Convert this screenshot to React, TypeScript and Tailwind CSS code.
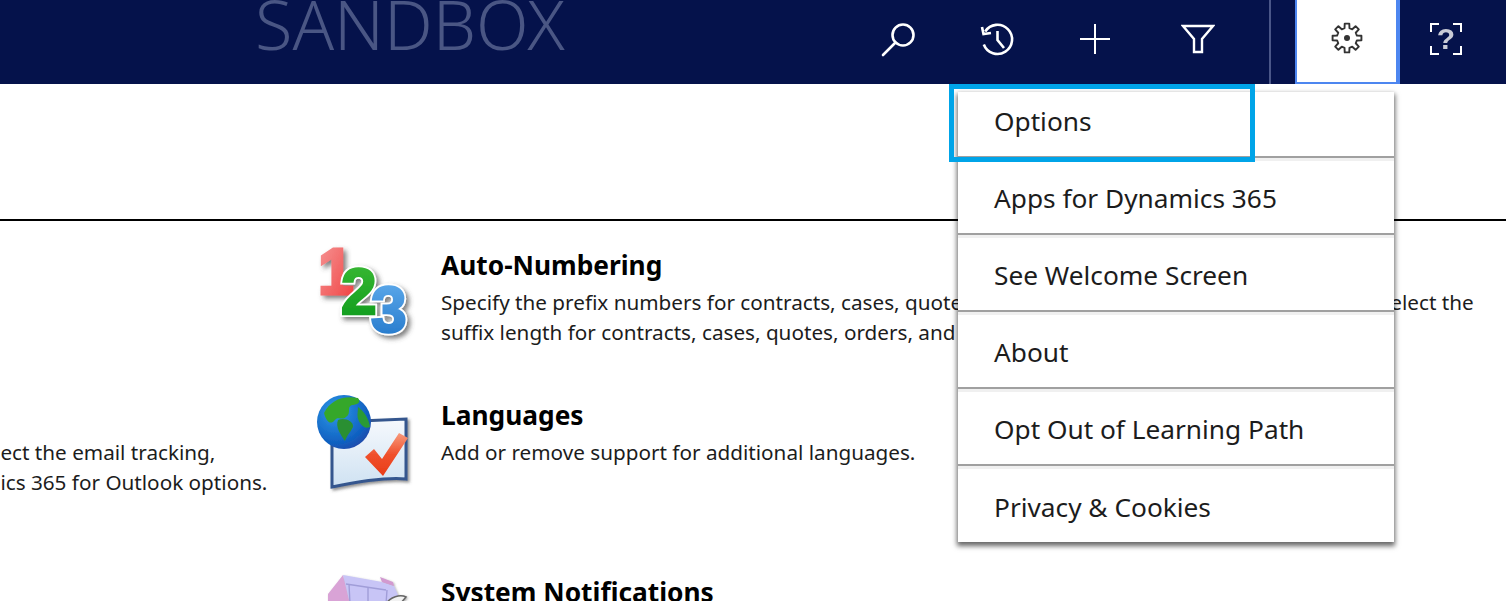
import React from "react"

const menuItems = [
  "Options",
  "Apps for Dynamics 365",
  "See Welcome Screen",
  "About",
  "Opt Out of Learning Path",
  "Privacy & Cookies",
]

function SearchIcon() {
  return (
    <svg width="38" height="38" viewBox="0 0 38 38" fill="none" stroke="white" strokeWidth="2.6">
      <circle cx="23" cy="15" r="10.5" />
      <path d="M15.5 22.5 L3 35" strokeLinecap="round" />
    </svg>
  )
}

function HistoryIcon() {
  return (
    <svg width="38" height="38" viewBox="0 0 38 38" fill="none" stroke="white" strokeWidth="2.6">
      <path d="M6.2 11.5 A14.6 14.6 0 1 1 4.8 24.5" />
      <path d="M3 7 L4.5 14 L12 13" />
      <path d="M18.5 11 V20 L25 28" />
    </svg>
  )
}

function PlusIcon() {
  return (
    <svg width="32" height="32" viewBox="0 0 32 32" fill="none" stroke="white" strokeWidth="2">
      <path d="M16 1 V31 M1 16 H31" />
    </svg>
  )
}

function FilterIcon() {
  return (
    <svg width="34" height="30" viewBox="0 0 34 30" fill="none" stroke="white" strokeWidth="2.4">
      <path d="M2 2 H32 L21 15 V28 H13 V15 Z" />
    </svg>
  )
}

// 8 square-ish teeth around a small filled hub
function gearPath() {
  const pt = (r: number, deg: number) => {
    const a = (deg * Math.PI) / 180
    return `${(16 + r * Math.cos(a)).toFixed(2)} ${(16 + r * Math.sin(a)).toFixed(2)}`
  }
  let d = ""
  for (let i = 0; i < 8; i++) {
    const c = i * 45 - 90
    d += `${i === 0 ? "M" : "L"}${pt(10.2, c - 14)} L${pt(14.6, c - 9)} L${pt(14.6, c + 9)} L${pt(10.2, c + 14)} `
  }
  return d + "Z"
}

function GearIcon() {
  return (
    <svg width="32" height="32" viewBox="0 0 32 32" fill="none" stroke="#333" strokeWidth="1.9" strokeLinejoin="round">
      <circle cx="16" cy="16" r="3" fill="#333" stroke="none" />
      <path d={gearPath()} />
    </svg>
  )
}

function HelpIcon() {
  return (
    <div className="relative flex h-[32px] w-[32px] items-center justify-center">
      <span className="font-['Liberation_Sans',sans-serif] text-[30px] font-bold leading-none text-[#c9cbd6] blur-[0.5px]">?</span>
      <svg className="absolute inset-0" width="32" height="32" viewBox="0 0 32 32" fill="none" stroke="white" strokeWidth="2">
        <path d="M1 9 V1 H9 M23 1 H31 V9 M1 23 V31 H9 M23 31 H31 V23" />
      </svg>
    </div>
  )
}

function NumbersIcon() {
  return (
    <svg width="100" height="96" viewBox="0 0 100 96" className="overflow-visible">
      <defs>
        <linearGradient id="red" x1="0" y1="0" x2="1" y2="1">
          <stop offset="0" stopColor="#f69a9a" />
          <stop offset="1" stopColor="#f03c3c" />
        </linearGradient>
        <linearGradient id="green" x1="0" y1="0" x2="0" y2="1">
          <stop offset="0" stopColor="#3dba35" />
          <stop offset="1" stopColor="#0c9a1c" />
        </linearGradient>
        <linearGradient id="blue" x1="0" y1="0" x2="0" y2="1">
          <stop offset="0" stopColor="#62aeee" />
          <stop offset="1" stopColor="#1f74c8" />
        </linearGradient>
        <filter id="soft" x="-20%" y="-20%" width="150%" height="150%">
          <feGaussianBlur in="SourceGraphic" stdDeviation="0.5" result="b" />
          <feDropShadow in="b" dx="3" dy="3" stdDeviation="2.4" floodColor="#444" floodOpacity="0.7" />
        </filter>
      </defs>
      <g fontFamily="'Liberation Sans', sans-serif" fontWeight="700" fontSize="64" filter="url(#soft)">
        <text x="2" y="47" fill="url(#red)" stroke="url(#red)" strokeWidth="3">1</text>
        <text x="25" y="67" fill="white" stroke="white" strokeWidth="6">2</text>
        <text x="25" y="67" fill="url(#green)" stroke="url(#green)" strokeWidth="2.5">2</text>
        <text x="55" y="85" fill="white" stroke="white" strokeWidth="6">3</text>
        <text x="55" y="85" fill="url(#blue)" stroke="url(#blue)" strokeWidth="2.5">3</text>
      </g>
    </svg>
  )
}

function LanguagesIcon() {
  return (
    <svg width="100" height="100" viewBox="0 0 100 100" className="overflow-visible">
      <defs>
        <linearGradient id="page" x1="0" y1="0" x2="0" y2="1">
          <stop offset="0" stopColor="#f6f9fd" />
          <stop offset="1" stopColor="#cfe2f2" />
        </linearGradient>
        <linearGradient id="check" x1="0" y1="0" x2="0" y2="1">
          <stop offset="0" stopColor="#f79a7c" />
          <stop offset="0.5" stopColor="#f0502c" />
          <stop offset="1" stopColor="#e83c18" />
        </linearGradient>
        <radialGradient id="sea" cx="0.35" cy="0.3" r="0.85">
          <stop offset="0" stopColor="#2f9ae8" />
          <stop offset="0.7" stopColor="#0f5fc0" />
          <stop offset="1" stopColor="#2a3f9f" />
        </radialGradient>
        <filter id="pageShadow" x="-10%" y="-10%" width="125%" height="125%">
          <feGaussianBlur in="SourceGraphic" stdDeviation="0.6" result="b" />
          <feDropShadow in="b" dx="2" dy="2" stdDeviation="1.6" floodColor="#444" floodOpacity="0.6" />
        </filter>
        <filter id="softEdge">
          <feGaussianBlur stdDeviation="0.5" />
        </filter>
      </defs>
      <path d="M16 30 L44 24 L90 22 V82 C70 80 45 84 16 90 Z" fill="url(#page)" stroke="#34578e" strokeWidth="3" filter="url(#pageShadow)" />
      <path d="M49 60 L58 52 L66 62 L83 36 L92 41 L67 79 Z" fill="url(#check)" filter="url(#softEdge)" />
      <g filter="url(#softEdge)">
        <circle cx="28" cy="25" r="27" fill="url(#sea)" />
        <path d="M8 16 C14 4 26 -2 42 1 C46 6 40 8 36 8 C30 10 36 16 30 20 C26 24 22 18 18 24 C14 28 10 24 8 16 Z" fill="#35a72c" />
        <path d="M22 23 C28 20 38 24 37 30 C34 36 31 38 29 44 C25 38 19 30 22 23 Z" fill="#2c8f33" />
        <path d="M42 10 C48 14 53 22 54 30 C50 32 47 30 44 26 C40 20 42 16 42 10 Z" fill="#2c9a35" />
      </g>
    </svg>
  )
}

function NotificationsIcon() {
  return (
    <svg width="100" height="60" viewBox="0 0 100 60" className="overflow-visible">
      <defs>
        <filter id="boxBlur" x="-10%" y="-10%" width="125%" height="125%">
          <feGaussianBlur in="SourceGraphic" stdDeviation="0.5" result="b" />
          <feDropShadow in="b" dx="1" dy="1" stdDeviation="1.2" floodColor="#555" floodOpacity="0.5" />
        </filter>
      </defs>
      <g filter="url(#boxBlur)">
        <path d="M12 20 L27 1 L34 30 H12 Z" fill="#d9a3d6" />
        <path d="M27 1 L66 8 L78 12 L86 30 H34 Z" fill="#c8c5f6" />
        <path d="M64 3 L77 8 L78 12 L66 8 Z" fill="#d29ad0" />
        <path d="M30 10 L70 16 M34 30 L33 10 M52 30 L52 13 M70 30 L71 16" stroke="#a09dd8" strokeWidth="1.4" fill="none" />
        <path d="M70 30 C74 23 84 20 90 23 L84 30 Z" fill="#f2f2f2" stroke="#666" strokeWidth="1.5" />
      </g>
    </svg>
  )
}

function SettingRow({
  height,
  aside,
  icon,
  title,
  lines,
}: {
  height: string
  aside?: string[]
  icon: React.ReactNode
  title: string
  lines: string[]
}) {
  return (
    <div className={`flex ${height}`}>
      <div className="w-[316px] shrink-0 overflow-hidden pt-[40px]">
        {aside && (
          <div className="-ml-[69px] whitespace-nowrap">
            {aside.map((l) => (
              <div key={l}>{l}</div>
            ))}
          </div>
        )}
      </div>
      <div className="w-[125px] shrink-0">{icon}</div>
      <div className="whitespace-nowrap">
        <div className="mb-[4px] text-[26.3px] font-bold leading-[36px] text-black">{title}</div>
        {lines.map((l) => (
          <div key={l}>{l}</div>
        ))}
      </div>
    </div>
  )
}

export default function App() {
  return (
    <div className="relative h-[601px] w-[1506px] overflow-hidden bg-white font-['Noto_Sans',sans-serif] text-[20.7px] leading-[30px] text-[#1c1c1c]">
      <header className="flex h-[84px] items-stretch overflow-hidden bg-[#05124b]">
        <div className="pl-[255px] text-[68.5px] font-light leading-[48px] text-[#4a5684]">SANDBOX</div>
        <div className="ml-auto flex items-center pb-[6px]">
          <div className="flex w-[100px] justify-center pl-[4px]"><SearchIcon /></div>
          <div className="flex w-[100px] justify-center pl-[2px]"><HistoryIcon /></div>
          <div className="flex w-[100px] justify-center pr-[4px]"><PlusIcon /></div>
          <div className="flex w-[100px] justify-center pl-[2px]"><FilterIcon /></div>
        </div>
        <div className="ml-[22px] w-[2px] bg-[#4a5688]" />
        <div className="ml-[24px] flex w-[105px] items-center justify-center border-x-[2px] border-b-[2px] border-r-[4px] border-[#4d86f0] bg-white pb-[6px] pl-[1px]">
          <GearIcon />
        </div>
        <div className="flex w-[106px] items-center justify-center pb-[7px] pr-[14px]">
          <HelpIcon />
        </div>
      </header>

      <div className="box-content h-[135px] border-b-[2px] border-black" />

      <div className="pt-[26px]">
        <SettingRow
          height="h-[150px]"
          icon={<NumbersIcon />}
          title="Auto-Numbering"
          lines={[
            "Specify the prefix numbers for contracts, cases, quotes, orders, assets and invoices. You can also select the",
            "suffix length for contracts, cases, quotes, orders, and invoices.",
          ]}
        />
        <SettingRow
          height="h-[177px]"
          aside={["and select the email tracking,", "Dynamics 365 for Outlook options."]}
          icon={<LanguagesIcon />}
          title="Languages"
          lines={["Add or remove support for additional languages."]}
        />
        <SettingRow
          height="h-[60px]"
          icon={<NotificationsIcon />}
          title="System Notifications"
          lines={[]}
        />
      </div>

      <div className="absolute left-[958px] top-[92px] w-[436px] bg-white text-[26.25px] text-[#1c1c1c] shadow-[0_3px_5px_1px_rgba(0,0,0,0.6)]">
        {menuItems.map((item, i) =>
          i === 0 ? (
            <div key={item} className="flex h-[66px] items-center border-b-[2px] border-[#a0a0a0] pb-[6px] pl-[36px]">
              {item}
            </div>
          ) : (
            <div
              key={item}
              className={`flex items-center border-t-[3px] border-[#f0f0f0] pl-[36px] pt-[2px] ${i < menuItems.length - 1 ? "h-[77px] border-b-[2px] border-b-[#a0a0a0]" : "h-[76px]"}`}
            >
              {item}
            </div>
          )
        )}
      </div>
      <div className="absolute left-[949px] top-[84px] h-[78px] w-[306px] border-[5px] border-[#00a4e8]" />
    </div>
  )
}
